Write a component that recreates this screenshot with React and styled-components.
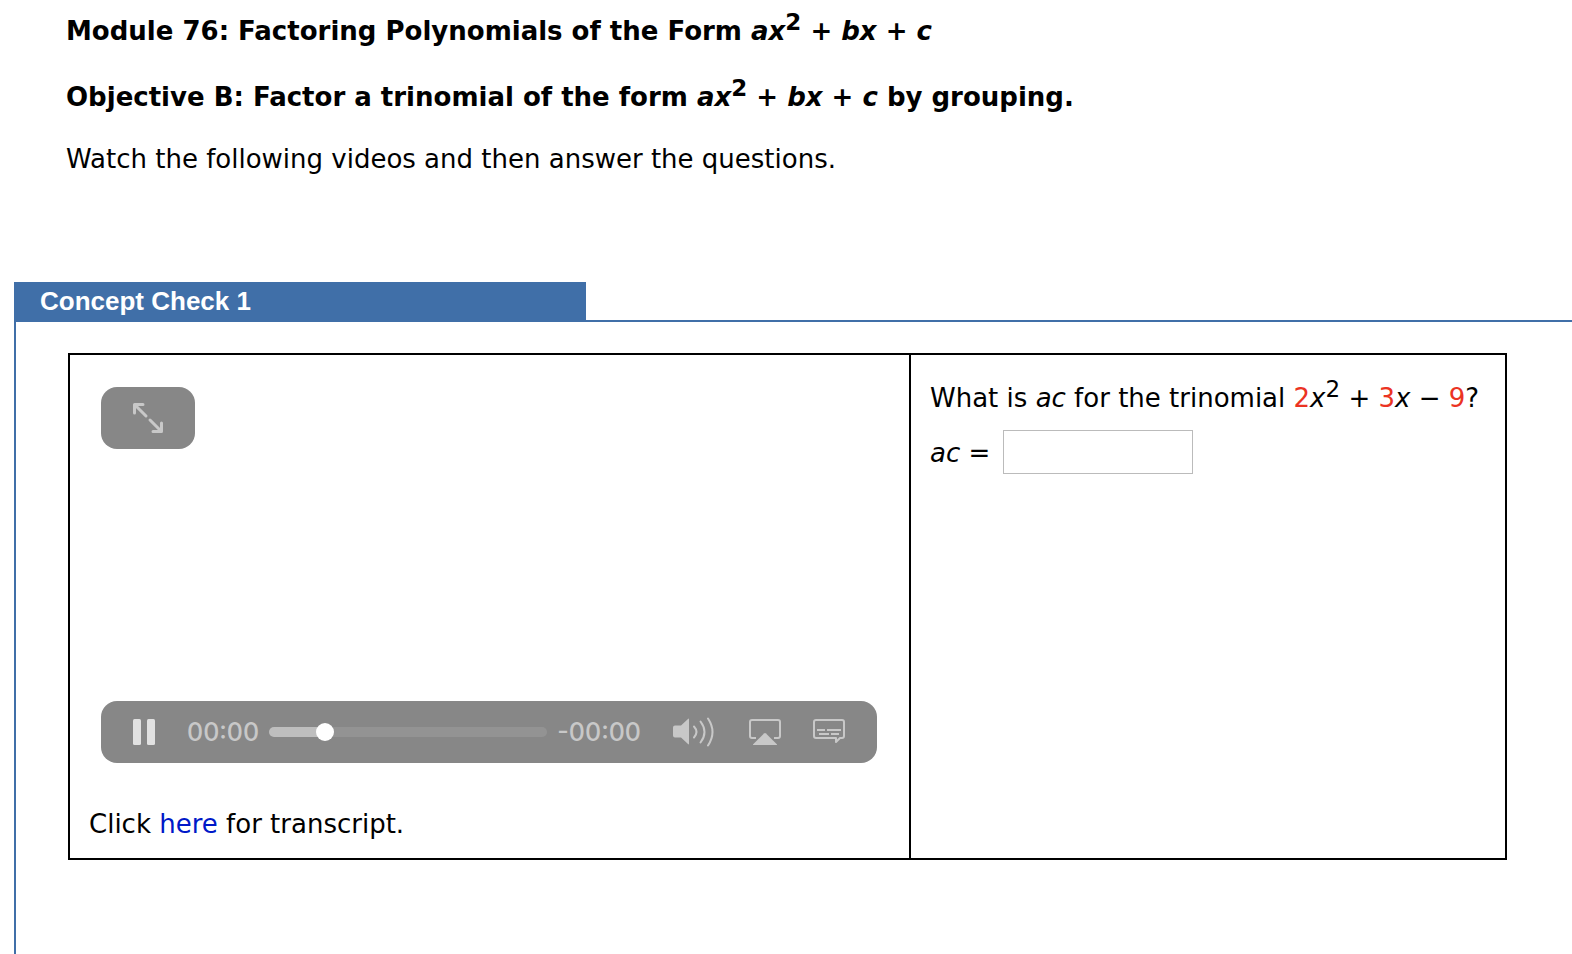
import React, { useState } from 'react';
import styled, { createGlobalStyle } from 'styled-components';

const App = () => {
  const [progress, setProgress] = useState(18);
  const [answer, setAnswer] = useState('');

  return (
    <Page>
      <GlobalStyle />
      <Intro>
        <Title>
          Module 76: Factoring Polynomials of the Form <i>ax</i>
          <Sup>2</Sup> + <i>bx</i> + <i>c</i>
        </Title>
        <Objective>
          Objective B: Factor a trinomial of the form <i>ax</i>
          <Sup>2</Sup> + <i>bx</i> + <i>c</i> by grouping.
        </Objective>
        <Text>Watch the following videos and then answer the questions.</Text>
      </Intro>

      <Section>
        <SectionHeader>
          <SectionTitle>Concept Check 1</SectionTitle>
        </SectionHeader>
        <SectionBody>
          <VideoCell>
            <Player>
              <ExpandButton aria-label='Enter full screen'>
                <ExpandIcon />
              </ExpandButton>
              <ControlBar>
                <IconButton aria-label='Pause'>
                  <PauseIcon />
                </IconButton>
                <Scrubber>
                  <Time>00:00</Time>
                  <Slider
                    type='range'
                    min='0'
                    max='100'
                    aria-label='Video position'
                    value={progress}
                    onChange={(e) => setProgress(Number(e.target.value))}
                    style={{ '--progress': `${progress}%` }}
                  />
                  <Time>-00:00</Time>
                </Scrubber>
                <IconButton aria-label='Volume'>
                  <VolumeIcon />
                </IconButton>
                <EndButtons>
                  <IconButton aria-label='AirPlay'>
                    <AirPlayIcon />
                  </IconButton>
                  <IconButton aria-label='Captions'>
                    <CaptionsIcon />
                  </IconButton>
                </EndButtons>
              </ControlBar>
            </Player>
            <Text>
              Click <Link href='#transcript'>here</Link> for transcript.
            </Text>
          </VideoCell>
          <QuestionCell>
            <Text>
              What is <i>ac</i> for the trinomial <Red>2</Red>
              <i>x</i>
              <Sup>2</Sup> + <Red>3</Red>
              <i>x</i> − <Red>9</Red>?
            </Text>
            <AnswerRow>
              <label htmlFor='answer'>
                <i>ac</i> =
              </label>
              <AnswerInput
                id='answer'
                type='text'
                autoComplete='off'
                value={answer}
                onChange={(e) => setAnswer(e.target.value)}
              />
            </AnswerRow>
          </QuestionCell>
        </SectionBody>
      </Section>
    </Page>
  );
};

const ExpandIcon = () => (
  <svg width='32' height='32' viewBox='0 0 32 32' fill='none' stroke='currentColor' strokeWidth='3' strokeLinecap='round' strokeLinejoin='round'>
    <path d='M2.5 11V2.5H11M3 3l11 11' />
    <path d='M29.5 21v8.5H21M29 29L18 18' />
  </svg>
);

const PauseIcon = () => (
  <svg width='22' height='26' viewBox='0 0 22 26' fill='#e1e1e1'>
    <rect width='8' height='26' rx='1.5' />
    <rect x='14' width='8' height='26' rx='1.5' />
  </svg>
);

const VolumeIcon = () => (
  <svg width='41' height='30' viewBox='0 0 41 30' fill='none' stroke='currentColor' strokeWidth='2' strokeLinecap='round'>
    <path d='M2 8.5h6l7-6.500q1-1 1 .5v24q0 1.500-1 .5l-7-6.500H2q-2 0-2-2v-8q0-2 2-2z' fill='currentColor' stroke='none' />
    <path d='M21 9.5q5 5.500 0 11' />
    <path d='M27.500 4.500q8 10.500 0 21' />
    <path d='M35 1.500q9 13.500 0 27' />
  </svg>
);

const AirPlayIcon = () => (
  <svg width='32' height='26' viewBox='0 0 32 26' fill='none' stroke='currentColor' strokeWidth='2'>
    <path d='M7 19H3q-2 0-2-2V3q0-2 2-2h26q2 0 2 2v14q0 2-2 2h-4' />
    <path d='M4.5 26q-1 0-.3-.8L15 14.4q1-.9 2 0l10.800 10.800q.7.8-.3.8z' fill='currentColor' stroke='none' />
  </svg>
);

const CaptionsIcon = () => (
  <svg width='32' height='26' viewBox='0 0 32 26' fill='none' stroke='currentColor' strokeWidth='2'>
    <path d='M3 1h26q2 0 2 2v14q0 2-2 2h-2l-4 4v-4H3q-2 0-2-2V3q0-2 2-2z' strokeLinejoin='round' />
    <path d='M4 11h8M14 11h14M6 15h10M18 15h8' />
  </svg>
);

const GlobalStyle = createGlobalStyle`
  * {
    box-sizing: border-box;
  }

  body {
    margin: 0;
    background: #fff;
    color: #000;
    font: 26px/32px Verdana, 'DejaVu Sans', sans-serif;
  }

  svg {
    display: block;
  }
`;

const Page = styled.main`
  min-height: 100vh;
  display: flex;
  flex-direction: column;
`;

const Intro = styled.header`
  padding: 15px 66px 107px;
`;

const Title = styled.h1`
  margin: 0 0 34px;
  font-size: 26px;
  line-height: 32px;
`;

const Objective = styled.h2`
  margin: 0 0 30px;
  font-size: 26px;
  line-height: 32px;
`;

const Text = styled.p`
  margin: 0;
`;

const Sup = styled.sup`
  font-size: 23px;
  line-height: 0;
`;

const Section = styled.section`
  flex: 1;
  display: flex;
  flex-direction: column;
  margin-left: 14px;
  border-left: 2px solid #406fa8;
`;

const SectionHeader = styled.div`
  margin-left: -2px;
  border-bottom: 2px solid #406fa8;
`;

const SectionTitle = styled.h3`
  width: 572px;
  max-width: 100%;
  margin: 0;
  padding: 3px 26px;
  background: #406fa8;
  color: #fff;
  font: bold 26px/32px Arial, 'Liberation Sans', sans-serif;
`;

const SectionBody = styled.div`
  display: grid;
  grid-template-columns: 841fr 594fr;
  margin: 31px 65px 64px 52px;
  border: 2px solid #000;
`;

const VideoCell = styled.div`
  display: flex;
  flex-direction: column;
  gap: 33px;
  padding: 20px 20px 18px 19px;
  border-right: 2px solid #000;
`;

const Player = styled.div`
  min-height: 400px;
  display: flex;
  flex-direction: column;
  justify-content: space-between;
  align-items: flex-start;
  padding: 12px;
  color: #c8c8c8;
`;

const ExpandButton = styled.button`
  display: flex;
  justify-content: center;
  align-items: center;
  width: 94px;
  height: 62px;
  padding: 0;
  border: 0;
  border-radius: 16px;
  background: #878787;
  color: inherit;
  cursor: pointer;
`;

const ControlBar = styled.div`
  width: 100%;
  height: 62px;
  display: flex;
  align-items: center;
  gap: 32px;
  padding: 0 32px;
  border-radius: 16px;
  background: #878787;
`;

const IconButton = styled.button`
  padding: 0;
  border: 0;
  background: none;
  color: inherit;
  cursor: pointer;
`;

const EndButtons = styled.div`
  display: flex;
  gap: 32px;
  margin-left: 3px;
`;

const Scrubber = styled.div`
  flex: 1;
  min-width: 0;
  display: flex;
  align-items: center;
  gap: 10px;
`;

const Time = styled.span`
  font: 500 25px/32px 'SF Pro Text', Inter, sans-serif;
`;

const Slider = styled.input`
  flex: 1;
  min-width: 0;
  height: 18px;
  margin: 0;
  appearance: none;
  background: none;
  cursor: pointer;

  &::-webkit-slider-runnable-track {
    height: 10px;
    border-radius: 5px;
    background: linear-gradient(to right, #bebebe var(--progress), #939393 var(--progress));
  }

  &::-webkit-slider-thumb {
    appearance: none;
    width: 18px;
    height: 18px;
    margin-top: -4px;
    border-radius: 50%;
    background: #fff;
  }
`;

const Link = styled.a`
  color: #0018c8;
  text-decoration: none;
`;

const QuestionCell = styled.div`
  padding: 27px 18px 20px 19px;
`;

const Red = styled.span`
  color: #eb3323;
`;

const AnswerRow = styled.div`
  display: flex;
  align-items: center;
  gap: 13px;
  margin-top: 16px;

  label {
    padding-top: 2px;
  }
`;

const AnswerInput = styled.input`
  width: 190px;
  height: 44px;
  padding: 4px 8px;
  border: 1px solid #bbb;
  background: #fff;
  font: inherit;
`;

export default App;
